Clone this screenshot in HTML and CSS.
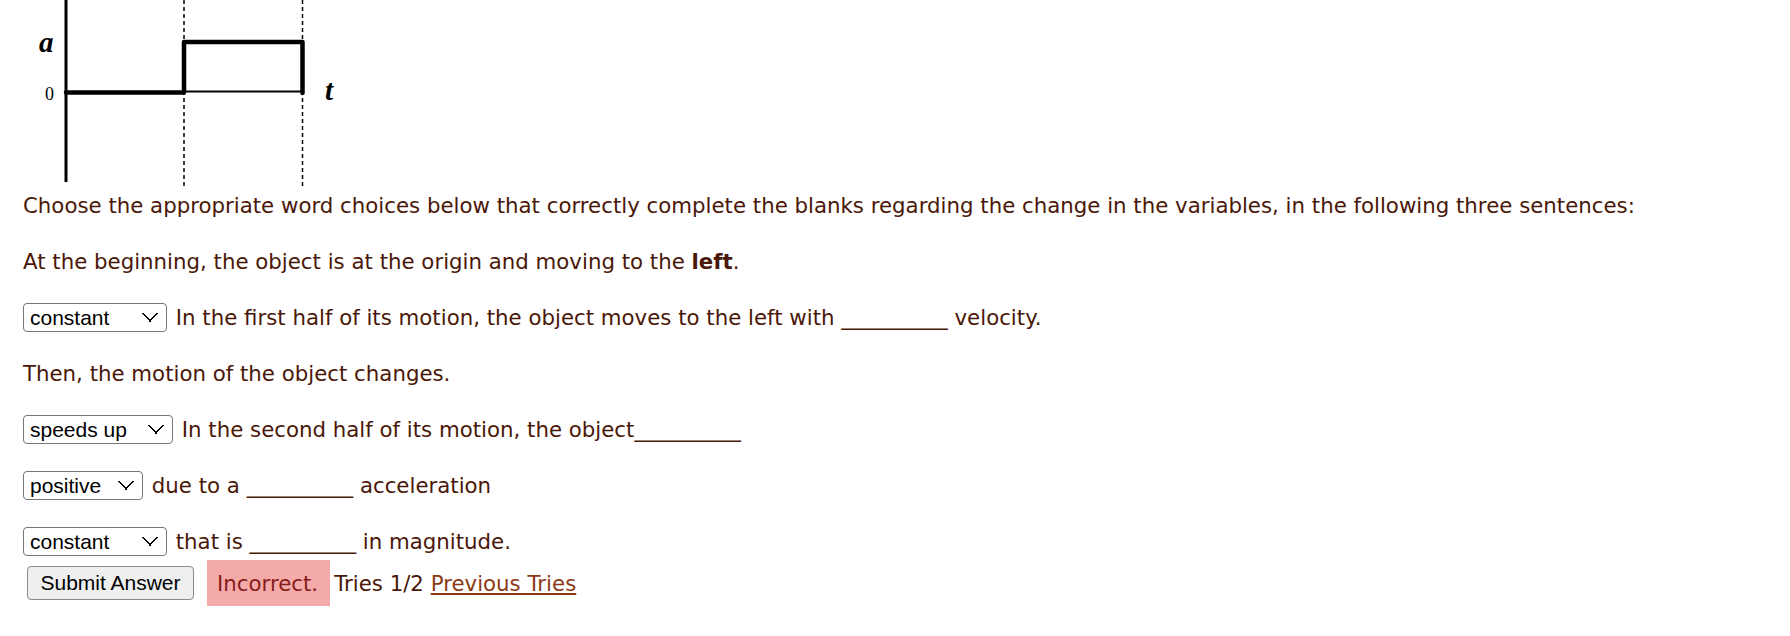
FILE: index.html
```html
<!DOCTYPE html>
<html lang="en">
<head>
<meta charset="utf-8">
<title>Problem</title>
<link rel="stylesheet" href="styles.css">
</head>
<body>
<div class="page">
  <div class="figure">
    <svg class="graph" width="360" height="186" viewBox="0 0 360 186" xmlns="http://www.w3.org/2000/svg">
      <line x1="161" y1="0" x2="161" y2="186" class="dash"/>
      <line x1="279.5" y1="0" x2="279.5" y2="186" class="dash"/>
      <line x1="43" y1="0" x2="43" y2="182" class="axis"/>
      <line x1="161" y1="91.5" x2="279.5" y2="91.5" class="thin"/>
      <polyline points="43,92.5 161,92.5 161,42 279.5,42 279.5,93" class="thick"/>
      <text x="16" y="52" class="var">a</text>
      <text x="22" y="100" class="zero">0</text>
      <text x="302" y="100" class="var">t</text>
    </svg>
  </div>
  <div class="lines">
    <p class="line">Choose the appropriate word choices below that correctly complete the blanks regarding the change in the variables, in the following three sentences:</p>
    <p class="line">At the beginning, the object is at the origin and moving to the <b>left</b>.</p>
    <div class="line"><select class="sel sel-const"><option>constant</option><option>increasing</option><option>decreasing</option></select> In the first half of its motion, the object moves to the left with <span class="blank">__________</span> velocity.</div>
    <p class="line">Then, the motion of the object changes.</p>
    <div class="line"><select class="sel sel-speed"><option>speeds up</option><option>slows down</option></select> In the second half of its motion, the object<span class="blank">__________</span></div>
    <div class="line"><select class="sel sel-sign"><option>positive</option><option>negative</option></select> due to a <span class="blank">__________</span> acceleration</div>
    <div class="line"><select class="sel sel-const"><option>constant</option><option>increasing</option><option>decreasing</option></select> that is <span class="blank">__________</span> in magnitude.</div>
  </div>
  <div class="submit-row">
    <button class="submit" type="button">Submit Answer</button>
    <span class="incorrect">Incorrect.</span>
    <span class="tries">Tries 1/2 <a href="#" class="prev">Previous Tries</a></span>
  </div>
</div>
</body>
</html>
```

FILE: styles.css
```css
html, body {
  margin: 0;
  padding: 0;
  background: #ffffff;
}

.page {
  padding-left: 23px;
  font-family: Verdana, "DejaVu Sans", sans-serif;
  font-size: 21.3px;
  color: #4a1808;
}

.figure {
  height: 191px;
}

.graph {
  display: block;
}

.graph .dash {
  stroke: #000;
  stroke-width: 1.5;
  stroke-dasharray: 4 3;
}

.graph .axis {
  stroke: #000;
  stroke-width: 3;
}

.graph .thin {
  stroke: #000;
  stroke-width: 2;
}

.graph .thick {
  fill: none;
  stroke: #000;
  stroke-width: 4.5;
  stroke-linejoin: round;
  stroke-linecap: round;
}

.graph .var {
  font-family: "Liberation Serif", "Times New Roman", serif;
  font-style: italic;
  font-weight: bold;
  font-size: 29px;
  fill: #000;
}

.graph .zero {
  font-family: "Liberation Serif", "Times New Roman", serif;
  font-size: 18px;
  fill: #000;
}

.lines {
  display: flex;
  flex-direction: column;
  gap: 27px;
}

.line {
  margin: 0;
  line-height: 29px;
  white-space: nowrap;
}

.line b {
  font-weight: bold;
}

.sel {
  -webkit-appearance: none;
  appearance: none;
  box-sizing: border-box;
  height: 29px;
  margin: 0 2px 0 0;
  padding: 0 0 0 6px;
  border: 1px solid #767676;
  border-radius: 4px;
  background-color: #ffffff;
  background-image:
    linear-gradient(45deg, transparent 45%, #000 45%, #000 57%, transparent 57%),
    linear-gradient(-45deg, transparent 45%, #000 45%, #000 57%, transparent 57%);
  background-repeat: no-repeat;
  background-size: 9px 9px, 9px 9px;
  font-family: "Liberation Sans", Arial, sans-serif;
  font-size: 21px;
  color: #000;
  vertical-align: baseline;
}

.sel-const {
  width: 144px;
  background-position: right 15px top 9px, right 8px top 9px;
}

.sel-speed {
  width: 150px;
  background-position: right 15px top 9px, right 8px top 9px;
}

.sel-sign {
  width: 120px;
  background-position: right 15px top 9px, right 8px top 9px;
}

.submit-row {
  display: flex;
  align-items: center;
  margin-top: 4px;
}

.submit {
  box-sizing: border-box;
  width: 167px;
  height: 34px;
  margin: 0 13px 0 4px;
  padding: 0;
  border: 1px solid #8a8a8a;
  border-radius: 4px;
  background: #efefef;
  font-family: "Liberation Sans", Arial, sans-serif;
  font-size: 21px;
  color: #000;
}

.incorrect {
  box-sizing: border-box;
  height: 46px;
  padding: 0 12px 0 10px;
  display: flex;
  align-items: center;
  background: #f3aaa9;
  color: #861c1a;
}

.tries {
  margin-left: 4px;
  color: #4a1808;
}

.prev {
  color: #8c3a16;
  text-decoration: underline;
}
```
